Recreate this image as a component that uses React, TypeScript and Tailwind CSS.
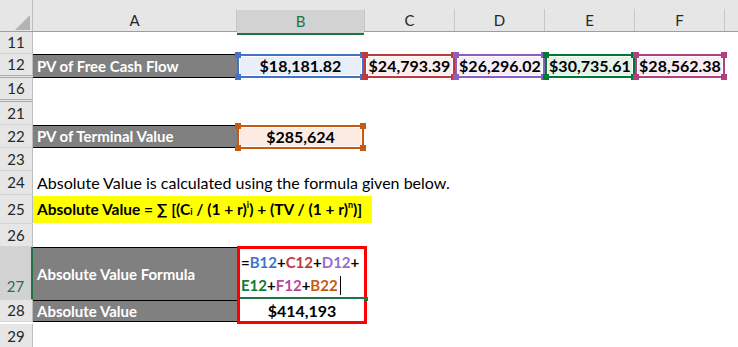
import React from "react";

const font = { fontFamily: "Lato, 'Open Sans', sans-serif" };

/* ---------- ROW HEADER ---------- */
function RowHead({ n, active = false, double = false }: { n: string; active?: boolean; double?: boolean }) {
  return (
    <div
      className={
        "w-[33px] shrink-0 flex justify-center text-[15px] border-r " +
        (active
          ? "bg-[#d2d2d2] text-[#217346] items-end pb-[2px] border-r-2 border-r-[#217346]"
          : "bg-[#e6e6e6] text-[#262626] items-center border-r-[#bdbdbd]") +
        (double ? " border-b-[3px] border-double border-b-[#a8a8a8]" : " border-b border-b-[#d4d4d4]")
      }
    >
      {n}
    </div>
  );
}

/* ---------- GRAY LABEL ---------- */
function Label({ text }: { text: string }) {
  return (
    <div className="w-[204px] shrink-0 bg-[#808080] border-y border-black text-white font-bold text-[15px] pl-[4px] flex items-center">
      {text}
    </div>
  );
}

function Handles({ color }: { color: string }) {
  return (
    <>
      <span className={"absolute -left-[2px] -top-[2px] w-[6px] h-[6px] " + color} />
      <span className={"absolute -right-[2px] -top-[2px] w-[6px] h-[6px] " + color} />
      <span className={"absolute -left-[2px] -bottom-[2px] w-[6px] h-[6px] " + color} />
      <span className={"absolute -right-[2px] -bottom-[2px] w-[6px] h-[6px] " + color} />
    </>
  );
}

/* ---------- REFERENCED CELL ---------- */
function Box({
  value,
  w,
  borderCls,
  fillCls,
  handleCls,
}: {
  value: string;
  w: string;
  borderCls: string;
  fillCls: string;
  handleCls: string;
}) {
  return (
    <div className={"relative shrink-0 h-[24px] " + w}>
      <div className={"h-full border-2 p-px bg-white " + borderCls}>
        <div className={"h-full flex items-center justify-center font-bold text-[16px] text-black " + fillCls}>
          {value}
        </div>
      </div>
      <Handles color={handleCls} />
    </div>
  );
}

export default function App() {
  return (
    <div className="w-[738px] h-[347px] overflow-hidden bg-white" style={font}>
      {/* ---------- COLUMN HEADERS ---------- */}
      <div className="flex h-[32px] bg-[#e6e6e6] border-b border-[#9e9e9e] items-end">
        <div className="w-[33px] h-full shrink-0 relative border-r border-[#bdbdbd]">
          <svg className="absolute left-[15px] top-[15px]" width="15" height="15" viewBox="0 0 15 15">
            <polygon points="15,0 15,15 0,15" fill="#b4b4b4" />
          </svg>
        </div>
        <div className="w-[204px] shrink-0 h-[22px] flex items-center justify-center text-[15px] text-[#262626] border-r border-[#c8c8c8]">A</div>
        <div className="w-[127px] shrink-0 h-full pt-[10px] bg-[#e6e6e6] flex flex-col">
          <div className="flex-1 bg-[#d2d2d2] flex items-center justify-center text-[15px] text-[#217346] border-b-2 border-[#217346]">B</div>
        </div>
        <div className="w-[91px] shrink-0 h-[22px] flex items-center justify-center text-[15px] text-[#262626] border-x border-[#c8c8c8]">C</div>
        <div className="w-[90px] shrink-0 h-[22px] flex items-center justify-center text-[15px] text-[#262626] border-r border-[#c8c8c8]">D</div>
        <div className="w-[90px] shrink-0 h-[22px] flex items-center justify-center text-[15px] text-[#262626] border-r border-[#c8c8c8]">E</div>
        <div className="w-[90px] shrink-0 h-[22px] flex items-center justify-center text-[15px] text-[#262626] border-r border-[#c8c8c8]">F</div>
        <div className="flex-1" />
      </div>

      {/* row 11 */}
      <div className="flex h-[22px]">
        <RowHead n="11" />
      </div>

      {/* row 12 */}
      <div className="flex h-[24px]">
        <RowHead n="12" double />
        <Label text="PV of Free Cash Flow" />
        <Box value="$18,181.82" w="w-[127px]" borderCls="border-[#4472c4]" fillCls="bg-[#e9eff9]" handleCls="bg-[#4472c4]" />
        <Box value="$24,793.39" w="w-[91px]" borderCls="border-[#c0393e]" fillCls="bg-[#fbeeee]" handleCls="bg-[#c0393e]" />
        <Box value="$26,296.02" w="w-[90px]" borderCls="border-[#8a5fc0]" fillCls="bg-[#f4eefa]" handleCls="bg-[#8a5fc0]" />
        <Box value="$30,735.61" w="w-[90px]" borderCls="border-[#007a33]" fillCls="bg-[#e5f2e8]" handleCls="bg-[#007a33]" />
        <Box value="$28,562.38" w="w-[90px]" borderCls="border-[#b0407f]" fillCls="bg-[#f9edf4]" handleCls="bg-[#b0407f]" />
      </div>

      {/* row 16 */}
      <div className="flex h-[24px]">
        <RowHead n="16" double />
      </div>

      {/* row 21 */}
      <div className="flex h-[23px]">
        <RowHead n="21" />
      </div>

      {/* row 22 */}
      <div className="flex h-[23px]">
        <RowHead n="22" />
        <Label text="PV of Terminal Value" />
        <Box value="$285,624" w="w-[127px]" borderCls="border-[#c55a11]" fillCls="bg-[#fbebe2]" handleCls="bg-[#c55a11]" />
      </div>

      {/* row 23 */}
      <div className="flex h-[23px]">
        <RowHead n="23" />
      </div>

      {/* row 24 */}
      <div className="flex h-[24px]">
        <RowHead n="24" />
        <div className="pl-[4px] flex items-center text-[16px] text-black whitespace-nowrap">
          Absolute Value is calculated using the formula given below.
        </div>
      </div>

      {/* row 25 */}
      <div className="flex h-[29px]">
        <RowHead n="25" />
        <div className="w-[339px] my-[1px] bg-[#ffff00] pl-[4px] flex items-center text-[15.5px] font-bold text-black whitespace-nowrap">
          Absolute Value = ∑ [(C<sub className="text-[9px]">i</sub>&nbsp;/ (1 + r)<sup className="text-[9px]">i</sup>) + (TV / (1 + r)<sup className="text-[9px]">n</sup>)]
        </div>
      </div>

      {/* row 26 */}
      <div className="flex h-[23px]">
        <RowHead n="26" />
      </div>

      {/* rows 27-28 */}
      <div className="flex">
        <div className="flex flex-col">
          <div className="flex h-[53px]">
            <RowHead n="27" active />
            <div className="w-[204px] shrink-0 bg-[#808080] border-t border-black text-white font-bold text-[15px] pl-[4px] flex items-center">
              Absolute Value Formula
            </div>
          </div>
          <div className="flex h-[22px]">
            <RowHead n="28" />
            <Label text="Absolute Value" />
          </div>
        </div>
        <div className="relative w-[130px] h-[78px] -mt-[1px] border-[3px] border-[#ff0000] flex flex-col">
          <div className="h-[51px] border-b-2 border-[#217346] pl-[1px] pt-[2px] font-bold text-[15px] leading-[23px]">
            <div>
              <span className="text-black">=</span>
              <span className="text-[#3f72cf]">B12</span>
              <span className="text-black">+</span>
              <span className="text-[#c0393e]">C12</span>
              <span className="text-black">+</span>
              <span className="text-[#9370cf]">D12</span>
              <span className="text-black">+</span>
            </div>
            <div className="flex items-center">
              <span className="text-[#0f7b34]">E12</span>
              <span className="text-black">+</span>
              <span className="text-[#b7479a]">F12</span>
              <span className="text-black">+</span>
              <span className="text-[#c55a11]">B22</span>
              <span className="ml-[2px] w-px h-[19px] bg-black" />
            </div>
          </div>
          <span className="absolute right-[-4px] top-[48px] w-[4px] h-[4px] bg-[#217346]" />
          <div className="flex-1 flex items-center justify-center font-bold text-[16px] text-black">$414,193</div>
        </div>
      </div>

      {/* row 29 */}
      <div className="flex h-[25px]">
        <RowHead n="29" />
      </div>
    </div>
  );
}
